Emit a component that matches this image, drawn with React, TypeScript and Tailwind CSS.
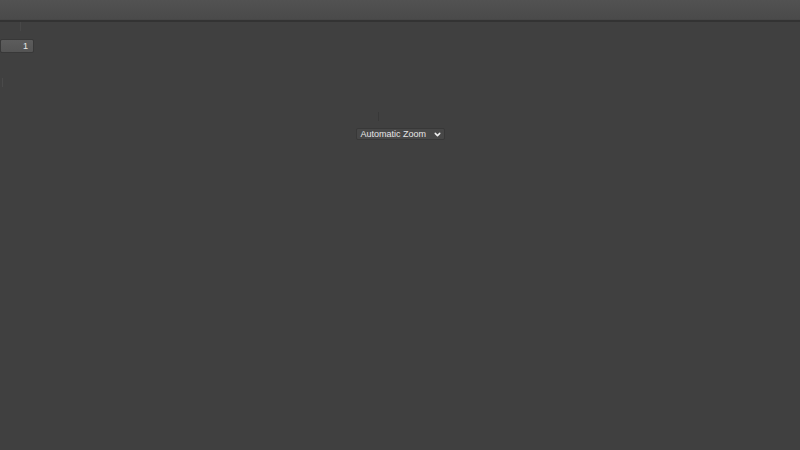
import { ChevronDown } from 'lucide-react';

const App = () => {
  return (
    <div
      className="flex h-[450px] w-full flex-col overflow-hidden bg-[#404040]"
      style={{ fontFamily: '"Liberation Sans", Arial, sans-serif' }}
    >
      {/* toolbar */}
      <div className="h-[19px] shrink-0 bg-gradient-to-b from-[#525252] to-[#4a4a4a]" />
      <div className="h-px shrink-0 bg-[#474747]" />
      <div className="h-[2px] shrink-0 bg-[#333333]" />

      <div className="relative flex flex-1 flex-col">
        <div className="ml-[20px] h-[9px] w-px bg-[#484848]" />

        {/* page number */}
        <div className="mt-[8px] flex h-[14px] w-[34px] items-center justify-end rounded-[2px] border border-[#383838] bg-gradient-to-b from-[#5c5c5c] to-[#545454] pr-[5px] text-[9px] leading-none text-[#e8e8e8]">
          1
        </div>

        <div className="ml-[2px] mt-[25px] h-[9px] w-px bg-[#4a4a4a]" />

        <div className="flex flex-col items-center">
          <div className="ml-[-43px] mt-[25px] h-[9px] w-px bg-[#383838]" />
          <div className="mt-[7px] flex h-[12px] w-[89px] items-center justify-between rounded-[2px] border border-[#383838] bg-[#474747] pl-[4px] pr-[2px] text-[9px] leading-none text-[#e6e6e6]">
            <span>Automatic Zoom</span>
            <ChevronDown className="h-[9px] w-[9px] text-[#f0f0f0]" strokeWidth={4} />
          </div>
        </div>
      </div>
    </div>
  );
};

export default App;
